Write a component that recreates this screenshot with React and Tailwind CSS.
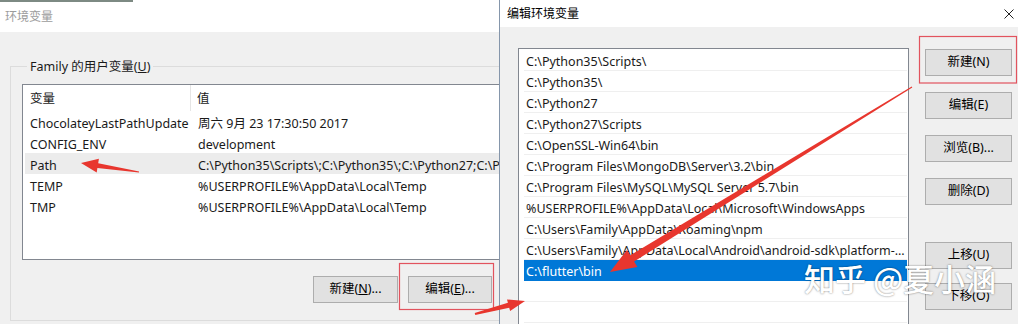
import React from 'react'

const leftRows = [
  ['ChocolateyLastPathUpdate', '周六 9月 23 17:30:50 2017'],
  ['CONFIG_ENV', 'development'],
  ['Path', 'C:\\Python35\\Scripts\\;C:\\Python35\\;C:\\Python27;C:\\Python27\\Scripts;C:\\OpenSSL'],
  ['TEMP', '%USERPROFILE%\\AppData\\Local\\Temp'],
  ['TMP', '%USERPROFILE%\\AppData\\Local\\Temp'],
]

const paths = [
  'C:\\Python35\\Scripts\\',
  'C:\\Python35\\',
  'C:\\Python27',
  'C:\\Python27\\Scripts',
  'C:\\OpenSSL-Win64\\bin',
  'C:\\Program Files\\MongoDB\\Server\\3.2\\bin',
  'C:\\Program Files\\MySQL\\MySQL Server 5.7\\bin',
  '%USERPROFILE%\\AppData\\Local\\Microsoft\\WindowsApps',
  'C:\\Users\\Family\\AppData\\Roaming\\npm',
  'C:\\Users\\Family\\AppData\\Local\\Android\\android-sdk\\platform-...',
  'C:\\flutter\\bin',
  '',
  '',
]

// tapered annotation arrow, thin at the tail and wide at the head
function arrowPoints(tail, tip, headLen, headHalf, tailHalf, neckHalf) {
  const dx = tip[0] - tail[0]
  const dy = tip[1] - tail[1]
  const len = Math.hypot(dx, dy)
  const ux = dx / len
  const uy = dy / len
  const nx = -uy
  const ny = ux
  const bx = tip[0] - ux * headLen
  const by = tip[1] - uy * headLen
  const pts = [
    tip,
    [bx + nx * headHalf, by + ny * headHalf],
    [bx + nx * neckHalf, by + ny * neckHalf],
    [tail[0] + nx * tailHalf, tail[1] + ny * tailHalf],
    [tail[0] - nx * tailHalf, tail[1] - ny * tailHalf],
    [bx - nx * neckHalf, by - ny * neckHalf],
    [bx - nx * headHalf, by - ny * headHalf],
  ]
  return pts.map((p) => p[0].toFixed(1) + ',' + p[1].toFixed(1)).join(' ')
}

function WinButton({ children, className = '' }) {
  return (
    <div
      className={`h-[27px] shrink-0 flex items-center justify-center bg-[#e1e1e1] border border-[#adadad] text-[12.5px] text-black ${className}`}
    >
      {children}
    </div>
  )
}

export default function App() {
  return (
    <div
      className="relative w-[1018px] h-[324px] overflow-hidden flex bg-[#f0f0f0] text-[12.5px] text-[#1a1a1a]"
      style={{ fontFamily: '"Noto Sans", "Noto Sans CJK SC", sans-serif' }}
    >
      {/* 环境变量 window (behind) */}
      <div className="w-[499px] shrink-0 flex flex-col overflow-hidden">
        <div className="h-[2px] shrink-0 flex">
          <div className="w-[133px] bg-[#7d8a83]" />
          <div className="flex-1 bg-white" />
        </div>
        <div className="h-[30px] shrink-0 bg-white flex items-center pl-[5px] text-[12px] text-[#9c9c9c]">环境变量</div>
        <div className="flex-1 pl-[10px]">
          <fieldset className="mt-[26px] w-[520px] border border-[#dcdcdc] pl-[11px] pb-[17px]">
            <legend className="ml-[5px] px-[3px] leading-[17px]">
              Family 的用户变量(<span className="underline">U</span>)
            </legend>
            <div className="mt-[9px] w-[500px] h-[176px] border border-[#828790] bg-white">
              <div className="h-[26px] flex items-start">
                <div className="w-[168px] h-full pt-[5px] pl-[7px] border-r border-[#e5e5e5]">变量</div>
                <div className="pt-[5px] pl-[6px]">值</div>
              </div>
              {leftRows.map(([name, value]) => (
                <div
                  key={name}
                  className={`h-[21px] flex items-start pt-[4px] whitespace-nowrap ${name === 'Path' ? 'bg-[#ececec] ml-[2px]' : ''}`}
                >
                  <div className={`${name === 'Path' ? 'w-[166px] pl-[5px]' : 'w-[168px] pl-[7px]'} shrink-0`}>{name}</div>
                  <div className="pl-[7px]">{value}</div>
                </div>
              ))}
            </div>
            <div className="mt-[16px] flex gap-[10px] pl-[291px]">
              <WinButton className="w-[85px]">
                新建(<span className="underline">N</span>)...
              </WinButton>
              <WinButton className="w-[84px]">
                编辑(<span className="underline">E</span>)...
              </WinButton>
            </div>
          </fieldset>
        </div>
      </div>

      {/* 编辑环境变量 window */}
      <div className="flex-1 flex flex-col border-l border-[#8596ab] overflow-hidden">
        <div className="h-[27px] shrink-0 bg-white flex items-center justify-between pl-[7px] pr-[3px] text-[12px] text-black">
          <span>编辑环境变量</span>
          <svg width="10" height="10" viewBox="0 0 10 10" className="mr-[1px]">
            <path d="M0.5 0.5 L9.5 9.5 M9.5 0.5 L0.5 9.5" stroke="#222" strokeWidth="1" />
          </svg>
        </div>
        <div className="flex-1 flex pl-[18px] pt-[21px] gap-[16px] overflow-hidden">
          <div className="w-[391px] h-[290px] shrink-0 border border-[#828790] bg-white pt-[1px] overflow-hidden">
            {paths.map((p, i) => (
              <div
                key={i}
                className={`h-[21px] ml-[5px] mr-[1px] pl-[2px] pt-[3px] whitespace-nowrap overflow-hidden ${
                  p === 'C:\\flutter\\bin' ? 'bg-[#0078d7] text-white' : 'border-b border-[#efefef]'
                }`}
              >
                {p}
              </div>
            ))}
          </div>
          <div className="w-[87px] shrink-0 flex flex-col pt-[1px]">
            <WinButton>新建(N)</WinButton>
            <WinButton className="mt-[16px]">编辑(E)</WinButton>
            <WinButton className="mt-[16px]">浏览(B)...</WinButton>
            <WinButton className="mt-[16px]">删除(D)</WinButton>
            <WinButton className="mt-[37px]">上移(U)</WinButton>
            <WinButton className="mt-[14px]">下移(O)</WinButton>
          </div>
        </div>
      </div>

      {/* watermark */}
      <div
        className="absolute left-[804px] top-[261px] text-[31px] leading-[34px] font-medium text-white whitespace-nowrap [text-shadow:0_0_2px_rgba(0,0,0,0.55)]"
        style={{ fontFamily: '"Noto Sans CJK SC", "Noto Sans", sans-serif' }}
      >
        知乎 @夏小涵
      </div>

      {/* annotations */}
      <svg className="absolute inset-0 pointer-events-none" width="1018" height="324" viewBox="0 0 1018 324">
        <rect x="399.5" y="263.5" width="94" height="46" fill="none" stroke="#e2535e" strokeWidth="1.2" />
        <rect x="919.5" y="36.5" width="97" height="46.5" fill="none" stroke="#e2535e" strokeWidth="1.2" />
        <polygon points={arrowPoints([139, 172], [81, 163], 17, 7, 0.6, 2.4)} fill="#e8362e" />
        <polygon points={arrowPoints([912, 87], [610, 272], 26, 10, 0.6, 3.6)} fill="#e8362e" />
        <polygon points={arrowPoints([475, 314], [525, 301], 17, 6, 1, 2.6)} fill="#e8362e" />
      </svg>
    </div>
  )
}
